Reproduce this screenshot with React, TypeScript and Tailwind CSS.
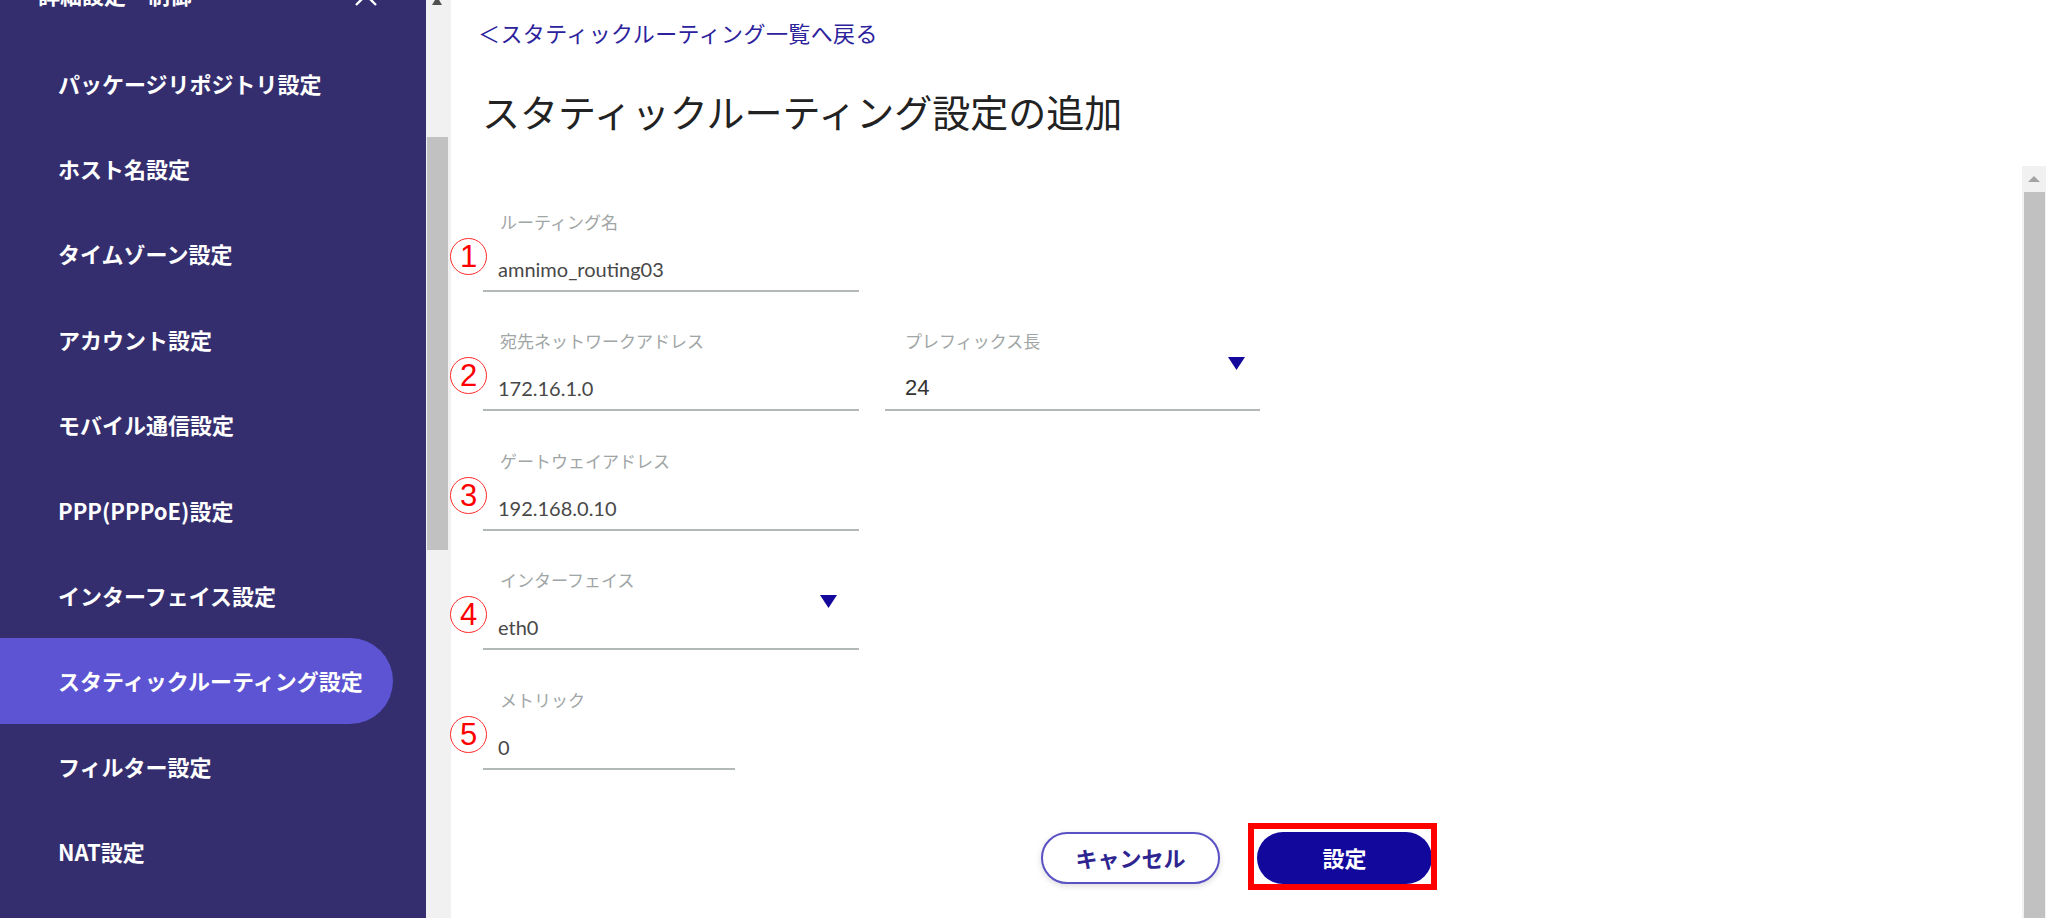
const menuItems = [
  "パッケージリポジトリ設定",
  "ホスト名設定",
  "タイムゾーン設定",
  "アカウント設定",
  "モバイル通信設定",
  "PPP(PPPoE)設定",
  "インターフェイス設定",
  "スタティックルーティング設定",
  "フィルター設定",
  "NAT設定",
];

const ACTIVE = "スタティックルーティング設定";

function Mark({ n }: { n: string }) {
  return (
    <div className="absolute left-[-33px] bottom-[15px] flex h-[37px] w-[37px] items-center justify-center rounded-full border-[1.5px] border-[#ff2a2a] bg-white font-['Liberation_Sans',sans-serif] text-[31px] leading-none text-[#ff0000]">
      {n}
    </div>
  );
}

function Arrow() {
  return (
    <svg width="17" height="13" viewBox="0 0 17 13">
      <polygon points="0,0 17,0 8.5,13" fill="#13089b" />
    </svg>
  );
}

interface FieldProps {
  label: string;
  value: string;
  mark?: string;
  className: string;
  padClass?: string;
  valueClass?: string;
  arrowClass?: string;
}

function Field({ label, value, mark, className, padClass = "pl-[17px]", valueClass, arrowClass }: FieldProps) {
  return (
    <div className={`relative flex flex-col border-b-2 border-[#b3b8b8] pt-[37.5px] ${className}`}>
      {mark && <Mark n={mark} />}
      <div className={`h-[24px] text-[17px] leading-[24px] text-[#a0a5a5] ${padClass}`}>{label}</div>
      <div
        className={`mt-[20px] mb-[6px] h-[30px] leading-[30px] ${padClass === "pl-[17px]" ? "pl-[15px]" : padClass} ${
          valueClass ?? "font-['Lato',sans-serif] text-[20px] text-[#484848]"
        }`}
      >
        {value}
      </div>
      {arrowClass && (
        <div className={`absolute ${arrowClass}`}>
          <Arrow />
        </div>
      )}
    </div>
  );
}

export default function App() {
  return (
    <div className="flex h-[918px] w-[2048px] overflow-hidden bg-white font-['Noto_Sans_CJK_JP',sans-serif]">
      {/* Sidebar */}
      <aside className="flex w-[426px] shrink-0 flex-col overflow-hidden bg-[#342e6f] text-white">
        <div className="-mt-[52px] flex h-[92.5px] shrink-0 items-center justify-between pl-[38px] pr-[49px]">
          <span className="text-[22px] font-bold">詳細設定・制御</span>
          <svg width="22" height="24" viewBox="0 0 22 24" className="translate-y-[2px]">
            <polyline points="1,21 11,11 21,21" fill="none" stroke="#ffffff" strokeWidth="2.4" />
          </svg>
        </div>
        {menuItems.map((item) => (
          <div
            key={item}
            className={`flex h-[85.4px] shrink-0 items-center pl-[58px] text-[22px] font-bold ${
              item === ACTIVE ? "w-[393px] rounded-r-full bg-[#5c54d2]" : ""
            }`}
          >
            {item}
          </div>
        ))}
      </aside>

      {/* Sidebar scrollbar */}
      <div className="flex w-[25px] shrink-0 flex-col items-center bg-[#f1f1f1]">
        <svg width="10" height="5" viewBox="0 0 10 5" className="ml-[-4px]">
          <polygon points="3,0 7,0 10,5 0,5" fill="#505050" />
        </svg>
        <div className="ml-[-2px] mt-[132px] h-[413px] w-[21px] bg-[#c1c1c1]" />
      </div>

      {/* Main */}
      <main className="flex min-w-0 flex-1 flex-col">
        <div className="pl-[27px] pt-[16px]">
          <a className="block text-[22px] leading-[32px] tracking-[0.4px] text-[#2c229c]">
            ＜スタティックルーティング一覧へ戻る
          </a>
        </div>
        <h1 className="mt-[39px] pl-[31px] text-[38px] font-normal leading-[48px] text-[#222]">
          スタティックルーティング設定の追加
        </h1>

        <div className="mt-[31px] flex min-h-0 flex-1">
          <div className="flex flex-1 flex-col pt-[6px]">
            <div className="flex flex-col pl-[32px]">
              <Field mark="1" label="ルーティング名" value="amnimo_routing03" className="w-[376px]" />
              <div className="flex gap-[26px]">
                <Field mark="2" label="宛先ネットワークアドレス" value="172.16.1.0" className="w-[376px]" />
                <Field
                  label="プレフィックス長"
                  value="24"
                  className="w-[375px]"
                  padClass="pl-[20px]"
                  valueClass="font-['Liberation_Sans',sans-serif] text-[22px] text-[#333]"
                  arrowClass="right-[15px] bottom-[39px]"
                />
              </div>
              <Field mark="3" label="ゲートウェイアドレス" value="192.168.0.10" className="w-[376px]" />
              <Field
                mark="4"
                label="インターフェイス"
                value="eth0"
                className="w-[376px]"
                arrowClass="right-[22px] bottom-[40px]"
              />
              <Field mark="5" label="メトリック" value="0" className="w-[252px]" />
            </div>

            <div className="mt-[62px] flex justify-center gap-[37px]">
              <button className="h-[52px] w-[179px] rounded-full border-2 border-[#5a51c4] bg-white text-[22px] font-bold text-[#2e2590] shadow-[0_2px_6px_rgba(0,0,0,0.15)]">
                キャンセル
              </button>
              <div className="relative">
                <button className="h-[52px] w-[175px] rounded-full bg-[#12099c] text-[22px] font-bold text-white">
                  設定
                </button>
                <div className="pointer-events-none absolute -left-[9px] -right-[5px] -top-[9px] -bottom-[6px] border-[6px] border-[#ff0000]" />
              </div>
            </div>
          </div>

          {/* Content scrollbar */}
          <div className="mr-[2px] flex w-[24px] shrink-0 flex-col bg-[#f1f1f1]">
            <div className="flex h-[26px] items-center justify-center">
              <svg width="12" height="6" viewBox="0 0 12 6">
                <polygon points="6,0 12,6 0,6" fill="#a3a3a3" />
              </svg>
            </div>
            <div className="mx-auto w-[21px] flex-1 bg-[#c1c1c1]" />
          </div>
        </div>
      </main>
    </div>
  );
}
